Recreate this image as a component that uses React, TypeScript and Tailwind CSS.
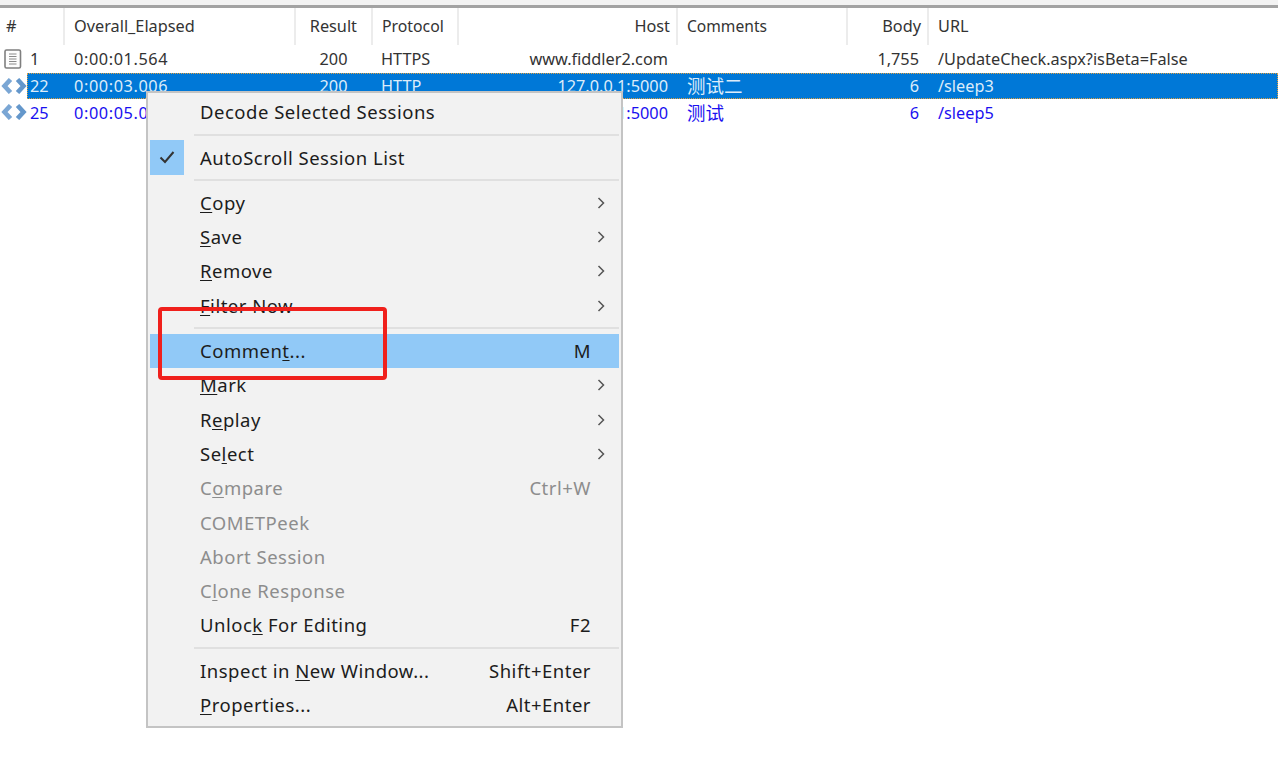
import React from "react";

const FONT = "font-['Noto_Sans','Noto_Sans_CJK_SC',sans-serif]";

function DocIcon() {
  return (
    <svg width="18" height="20" viewBox="0 0 18 20" className="shrink-0">
      <rect x="1" y="1" width="15.5" height="18" rx="1.5" fill="#fdfdfd" stroke="#7f7f7f" strokeWidth="1.6" />
      <path d="M5 5h7.5M5 7.5h7.5M5 10h7.5M5 12.5h7.5M5 15h7.5" stroke="#8a8a8a" strokeWidth="1" />
    </svg>
  );
}

function ArrowsIcon() {
  return (
    <svg width="26" height="16" viewBox="0 0 26 16" className="shrink-0">
      <path d="M9.5 1.5 L3.5 8 L9.5 14.5" fill="none" stroke="#7aa6d4" strokeWidth="4.6" />
      <path d="M16.5 1.5 L22.5 8 L16.5 14.5" fill="none" stroke="#6497cb" strokeWidth="4.6" />
    </svg>
  );
}

const COLS = "grid grid-cols-[37px_231px_77px_86px_219px_170px_81px_1fr]";

type RowData = {
  icon: React.ReactNode;
  n: string;
  time: string;
  result: string;
  proto: string;
  host: string;
  comment: string;
  body: string;
  url: string;
};

const rows: RowData[] = [
  { icon: <div className="pl-[3px]"><DocIcon /></div>, n: "1", time: "0:00:01.564", result: "200", proto: "HTTPS", host: "www.fiddler2.com", comment: "", body: "1,755", url: "/UpdateCheck.aspx?isBeta=False" },
  { icon: <ArrowsIcon />, n: "22", time: "0:00:03.006", result: "200", proto: "HTTP", host: "127.0.0.1:5000", comment: "测试二", body: "6", url: "/sleep3" },
  { icon: <ArrowsIcon />, n: "25", time: "0:00:05.006", result: "200", proto: "HTTP", host: "127.0.0.1:5000", comment: "测试", body: "6", url: "/sleep5" },
];

function Row({ r, tone }: { r: RowData; tone: "plain" | "selected" | "blue" }) {
  const toneCls =
    tone === "selected"
      ? "bg-[#0078d7] pt-[1px] text-[#dcecfa] outline-1 outline-dotted outline-offset-[-1px] outline-[#e0a040]"
      : tone === "blue"
        ? "pt-[1px] text-[#1a10f0]"
        : "text-[#333333]";
  return (
    <div className="flex h-[26.5px] items-center">
      <div className="flex w-[27px] shrink-0 items-center pl-[1px]">{r.icon}</div>
      <div className={`${COLS} h-full flex-1 items-center ${toneCls}`}>
        <div className="pl-[3px]">{r.n}</div>
        <div className="pl-[10px] tracking-[0.6px]">{r.time}</div>
        <div className="text-center">{r.result}</div>
        <div className="pl-[9px]">{r.proto}</div>
        <div className="pr-[9px] text-right">{r.host}</div>
        <div className="pl-[10px] text-[18.5px] leading-none">{r.comment}</div>
        <div className="pr-[9px] text-right">{r.body}</div>
        <div className="pl-[10px]">{r.url}</div>
      </div>
    </div>
  );
}

function HeaderCell({ label, right, pr = "pr-[7px]", extra = "" }: { label: string; right?: boolean; pr?: string; extra?: string }) {
  return (
    <div
      className={`flex h-full items-center border-r-2 border-[#ececec] pl-[9px] ${pr} ${extra} ${right ? "justify-end" : ""}`}
    >
      {label}
    </div>
  );
}

type Item = {
  label: React.ReactNode;
  key2?: string;
  sub?: boolean;
  disabled?: boolean;
  active?: boolean;
  checked?: boolean;
};

const U = ({ children }: { children: React.ReactNode }) => <span className="underline underline-offset-2">{children}</span>;

const Sep = () => (
  <div className="flex h-[11px] items-center pl-[44px]">
    <div className="h-[2px] w-full bg-[#e0e0e0]" />
  </div>
);

function MenuItem({ label, key2, sub, disabled, active, checked }: Item) {
  return (
    <div
      className={`relative flex h-[34.3px] items-center pl-[50px] pr-[28px] ${active ? "bg-[#91c9f7]" : ""} ${disabled ? "text-[#8d8d8d]" : "text-[#1c1c1c]"}`}
    >
      {checked && (
        <div className="absolute left-0 top-0 flex h-full w-[34px] items-center justify-center bg-[#91c9f7]">
          <svg width="16" height="14" viewBox="0 0 16 14">
            <path d="M1.5 7.5 L6 12 L14.5 2" fill="none" stroke="#333" strokeWidth="2" />
          </svg>
        </div>
      )}
      <span className="flex-1">{label}</span>
      {key2 && <span>{key2}</span>}
      {sub && (
        <svg width="8" height="12" viewBox="0 0 8 12" className="absolute right-[14px]">
          <path d="M1.5 1 L6.5 6 L1.5 11" fill="none" stroke="#555" strokeWidth="1.5" />
        </svg>
      )}
    </div>
  );
}

export default function App() {
  return (
    <div className={`relative h-[764px] w-[1278px] overflow-hidden bg-white text-[16.3px] ${FONT}`}>
      <div className="h-[5px] bg-[#f3f3f3]" />
      <div className="h-[3px] bg-[#a3a3a3]" />
      <div className="grid h-[37px] grid-cols-[65px_231px_77px_86px_219px_170px_81px_1fr] text-[#333333]">
        <div className="flex h-full items-center border-r-2 border-[#ececec] pl-[6px]">#</div>
        <HeaderCell label="Overall_Elapsed" />
        <HeaderCell label="Result" right pr="pr-[14px]" />
        <HeaderCell label="Protocol" extra="text-[15.8px]" />
        <HeaderCell label="Host" right pr="pr-[6px]" />
        <HeaderCell label="Comments" extra="text-[15.6px]" />
        <HeaderCell label="Body" right pr="pr-[6px]" />
        <div className="flex h-full items-center pl-[9px]">URL</div>
      </div>
      <div className="pt-[1px]">
        <Row r={rows[0]} tone="plain" />
        <Row r={rows[1]} tone="selected" />
        <Row r={rows[2]} tone="blue" />
      </div>

      {/* context menu */}
      <div className="absolute left-[146px] top-[91px] w-[477px] border-2 border-[#c4c4c4] bg-[#f2f2f2] pb-[4px] pl-[2px] pr-[2px] pt-[2px] text-[18.5px] tracking-[0.5px]">
        <MenuItem label="Decode Selected Sessions" />
        <Sep />
        <MenuItem label="AutoScroll Session List" checked />
        <Sep />
        <MenuItem label={<><U>C</U>opy</>} sub />
        <MenuItem label={<><U>S</U>ave</>} sub />
        <MenuItem label={<><U>R</U>emove</>} sub />
        <MenuItem label={<><U>F</U>ilter Now</>} sub />
        <Sep />
        <MenuItem label={<>Commen<U>t</U>...</>} key2="M" active />
        <MenuItem label={<><U>M</U>ark</>} sub />
        <MenuItem label={<>R<U>e</U>play</>} sub />
        <MenuItem label={<>Se<U>l</U>ect</>} sub />
        <MenuItem label={<>C<U>o</U>mpare</>} key2="Ctrl+W" disabled />
        <MenuItem label="COMETPeek" disabled />
        <MenuItem label="Abort Session" disabled />
        <MenuItem label={<>C<U>l</U>one Response</>} disabled />
        <MenuItem label={<>Unloc<U>k</U> For Editing</>} key2="F2" />
        <Sep />
        <MenuItem label={<>Inspect in <U>N</U>ew Window...</>} key2="Shift+Enter" />
        <MenuItem label={<><U>P</U>roperties...</>} key2="Alt+Enter" />
      </div>

      {/* red annotation */}
      <div className="absolute left-[158px] top-[307px] h-[73px] w-[229px] rounded-[4px] border-[4px] border-[#f0201c]" />
    </div>
  );
}
